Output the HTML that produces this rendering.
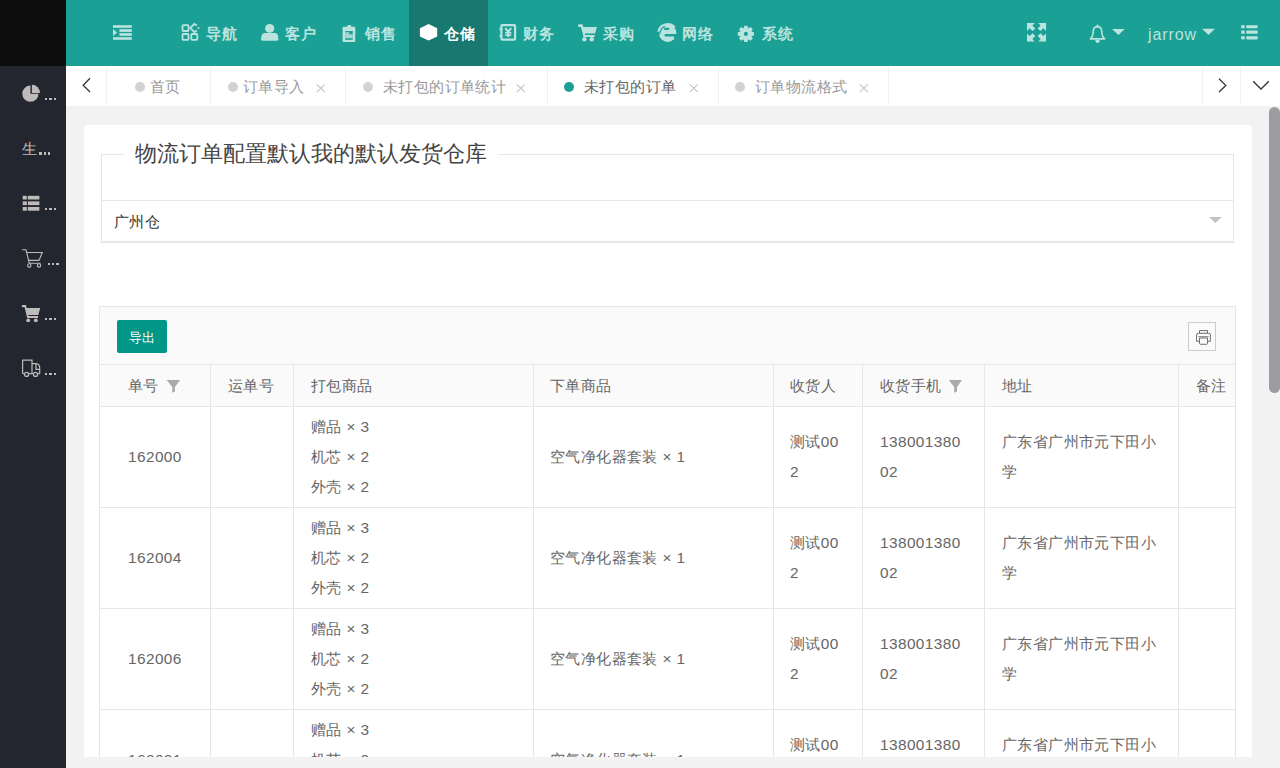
<!DOCTYPE html><html><head><meta charset="utf-8"><style>
*{margin:0;padding:0;box-sizing:border-box}
html,body{width:1280px;height:768px;overflow:hidden;font-family:"Liberation Sans",sans-serif;background:#f2f2f2;color:#666}
div,span,svg{position:absolute}
.t{white-space:nowrap;line-height:20px}
.nv{color:#bbe3df;font-size:15px;font-weight:bold;letter-spacing:1px}
.tb{font-size:15.4px;color:#999;letter-spacing:0.4px}
.td{font-size:15.4px;color:#666;letter-spacing:0.4px}
.vl{width:1px;background:#e6e6e6}
.hl{height:1px;background:#e6e6e6}
</style></head><body>
<div style="left:0;top:0;width:66px;height:66px;background:#0c0c0c"></div>
<div style="left:0;top:66px;width:66px;height:702px;background:#23262e"></div>
<div style="left:66px;top:0;width:1214px;height:66px;background:#1aa094"></div>
<div style="left:66px;top:66px;width:1214px;height:40px;background:#fff"></div>
<div class="t nv" style="left:205.8px;top:24px">导航</div>
<div class="t nv" style="left:285.2px;top:24px">客户</div>
<div class="t nv" style="left:364.6px;top:24px">销售</div>
<div style="left:409.0px;top:0;width:79.4px;height:66px;background:#197971"></div>
<div class="t nv" style="left:444.0px;top:24px;color:#fff">仓储</div>
<div class="t nv" style="left:523.4px;top:24px">财务</div>
<div class="t nv" style="left:602.8px;top:24px">采购</div>
<div class="t nv" style="left:682.2px;top:24px">网络</div>
<div class="t nv" style="left:761.6px;top:24px">系统</div>
<div class="vl" style="left:106px;top:67px;height:38px;background:#f0f0f0"></div>
<div class="vl" style="left:210px;top:67px;height:38px;background:#f0f0f0"></div>
<div class="vl" style="left:345px;top:67px;height:38px;background:#f0f0f0"></div>
<div class="vl" style="left:547px;top:67px;height:38px;background:#f0f0f0"></div>
<div class="vl" style="left:718px;top:67px;height:38px;background:#f0f0f0"></div>
<div class="vl" style="left:888px;top:67px;height:38px;background:#f0f0f0"></div>
<div class="vl" style="left:1202px;top:67px;height:38px;background:#f0f0f0"></div>
<div class="vl" style="left:1240px;top:67px;height:38px;background:#f0f0f0"></div>
<div style="left:135px;top:82px;width:10px;height:10px;border-radius:50%;background:#d2d2d2"></div>
<div class="t tb" style="left:150px;top:77px;">首页</div>
<div style="left:228px;top:82px;width:10px;height:10px;border-radius:50%;background:#d2d2d2"></div>
<div class="t tb" style="left:243px;top:77px;">订单导入</div>
<div style="left:363px;top:82px;width:10px;height:10px;border-radius:50%;background:#d2d2d2"></div>
<div class="t tb" style="left:383px;top:77px;">未打包的订单统计</div>
<div style="left:564px;top:82px;width:10px;height:10px;border-radius:50%;background:#1aa094"></div>
<div class="t tb" style="left:584px;top:77px;color:#666">未打包的订单</div>
<div style="left:735px;top:82px;width:10px;height:10px;border-radius:50%;background:#d2d2d2"></div>
<div class="t tb" style="left:755px;top:77px;">订单物流格式</div>
<div style="left:84px;top:125px;width:1168px;height:640px;background:#fff;border-radius:4px"></div>
<div style="left:101px;top:154px;width:1133px;height:46px;border:1px solid #e6e6e6;border-bottom:none"></div>
<div class="t" style="left:124px;top:139px;padding:0 11px;background:#fff;font-size:22px;line-height:30px;color:#444">物流订单配置默认我的默认发货仓库</div>
<div style="left:101px;top:200px;width:1133px;height:43px;border:1px solid #e6e6e6;border-bottom:2px solid #e6e6e6;background:#fff"></div>
<div class="t" style="left:114px;top:212px;font-size:15.4px;color:#333;letter-spacing:0.4px">广州仓</div>
<div style="left:99px;top:306px;width:1137px;height:59px;background:#fafafa;border:1px solid #e6e6e6"></div>
<div class="t" style="left:117px;top:320px;width:50px;height:33px;background:#009688;border-radius:2px;color:#fff;font-size:13.2px;text-align:center;line-height:35px">导出</div>
<div style="left:1188px;top:322px;width:28px;height:29px;border:1px solid #ccc"></div>
<div style="left:99px;top:364px;width:1137px;height:393px;overflow:hidden">
<div style="left:0;top:0;width:1137px;height:43px;background:#fafafa"></div>
<div class="vl" style="left:0px;top:0;height:393px"></div>
<div class="vl" style="left:111px;top:0;height:393px"></div>
<div class="vl" style="left:194px;top:0;height:393px"></div>
<div class="vl" style="left:434px;top:0;height:393px"></div>
<div class="vl" style="left:674px;top:0;height:393px"></div>
<div class="vl" style="left:763px;top:0;height:393px"></div>
<div class="vl" style="left:885px;top:0;height:393px"></div>
<div class="vl" style="left:1079px;top:0;height:393px"></div>
<div class="vl" style="left:1136px;top:0;height:393px"></div>
<div class="hl" style="left:0;top:0px;width:1137px"></div>
<div class="hl" style="left:0;top:42px;width:1137px"></div>
<div class="hl" style="left:0;top:143px;width:1137px"></div>
<div class="hl" style="left:0;top:244px;width:1137px"></div>
<div class="hl" style="left:0;top:345px;width:1137px"></div>
<div class="t td" style="left:29px;top:12px">单号</div>
<div class="t td" style="left:129px;top:12px">运单号</div>
<div class="t td" style="left:212px;top:12px">打包商品</div>
<div class="t td" style="left:451px;top:12px">下单商品</div>
<div class="t td" style="left:691px;top:12px">收货人</div>
<div class="t td" style="left:781px;top:12px">收货手机</div>
<div class="t td" style="left:903px;top:12px">地址</div>
<div class="t td" style="left:1097px;top:12px">备注</div>
<div class="t td" style="left:29px;top:83px">162000</div>
<div class="t td" style="left:212px;top:53px">赠品 × 3</div>
<div class="t td" style="left:212px;top:83px">机芯 × 2</div>
<div class="t td" style="left:212px;top:113px">外壳 × 2</div>
<div class="t td" style="left:451px;top:83px">空气净化器套装 × 1</div>
<div class="t td" style="left:691px;top:68px">测试00</div>
<div class="t td" style="left:691px;top:98px">2</div>
<div class="t td" style="left:781px;top:68px">138001380</div>
<div class="t td" style="left:781px;top:98px">02</div>
<div class="t td" style="left:903px;top:68px">广东省广州市元下田小</div>
<div class="t td" style="left:903px;top:98px">学</div>
<div class="t td" style="left:29px;top:184px">162004</div>
<div class="t td" style="left:212px;top:154px">赠品 × 3</div>
<div class="t td" style="left:212px;top:184px">机芯 × 2</div>
<div class="t td" style="left:212px;top:214px">外壳 × 2</div>
<div class="t td" style="left:451px;top:184px">空气净化器套装 × 1</div>
<div class="t td" style="left:691px;top:169px">测试00</div>
<div class="t td" style="left:691px;top:199px">2</div>
<div class="t td" style="left:781px;top:169px">138001380</div>
<div class="t td" style="left:781px;top:199px">02</div>
<div class="t td" style="left:903px;top:169px">广东省广州市元下田小</div>
<div class="t td" style="left:903px;top:199px">学</div>
<div class="t td" style="left:29px;top:285px">162006</div>
<div class="t td" style="left:212px;top:255px">赠品 × 3</div>
<div class="t td" style="left:212px;top:285px">机芯 × 2</div>
<div class="t td" style="left:212px;top:315px">外壳 × 2</div>
<div class="t td" style="left:451px;top:285px">空气净化器套装 × 1</div>
<div class="t td" style="left:691px;top:270px">测试00</div>
<div class="t td" style="left:691px;top:300px">2</div>
<div class="t td" style="left:781px;top:270px">138001380</div>
<div class="t td" style="left:781px;top:300px">02</div>
<div class="t td" style="left:903px;top:270px">广东省广州市元下田小</div>
<div class="t td" style="left:903px;top:300px">学</div>
<div class="t td" style="left:29px;top:386px">162021</div>
<div class="t td" style="left:212px;top:356px">赠品 × 3</div>
<div class="t td" style="left:212px;top:386px">机芯 × 2</div>
<div class="t td" style="left:212px;top:416px">外壳 × 2</div>
<div class="t td" style="left:451px;top:386px">空气净化器套装 × 1</div>
<div class="t td" style="left:691px;top:371px">测试00</div>
<div class="t td" style="left:691px;top:401px">2</div>
<div class="t td" style="left:781px;top:371px">138001380</div>
<div class="t td" style="left:781px;top:401px">02</div>
<div class="t td" style="left:903px;top:371px">广东省广州市元下田小</div>
<div class="t td" style="left:903px;top:401px">学</div>
</div>
<div class="t" style="left:1148px;top:25px;font-size:16px;letter-spacing:0.9px;color:#bbe3df">jarrow</div>
<div class="t" style="left:22px;top:139px;font-size:15.4px;color:#bfbbbb">生</div>
<div style="left:45.0px;top:97.8px;width:2.4px;height:2.4px;background:#bfbbbb"></div>
<div style="left:49.3px;top:97.8px;width:2.4px;height:2.4px;background:#bfbbbb"></div>
<div style="left:53.6px;top:97.8px;width:2.4px;height:2.4px;background:#bfbbbb"></div>
<div style="left:39.3px;top:152.3px;width:2.4px;height:2.4px;background:#bfbbbb"></div>
<div style="left:43.6px;top:152.3px;width:2.4px;height:2.4px;background:#bfbbbb"></div>
<div style="left:47.9px;top:152.3px;width:2.4px;height:2.4px;background:#bfbbbb"></div>
<div style="left:45.0px;top:207.8px;width:2.4px;height:2.4px;background:#bfbbbb"></div>
<div style="left:49.3px;top:207.8px;width:2.4px;height:2.4px;background:#bfbbbb"></div>
<div style="left:53.6px;top:207.8px;width:2.4px;height:2.4px;background:#bfbbbb"></div>
<div style="left:47.7px;top:262.9px;width:2.4px;height:2.4px;background:#bfbbbb"></div>
<div style="left:52.0px;top:262.9px;width:2.4px;height:2.4px;background:#bfbbbb"></div>
<div style="left:56.3px;top:262.9px;width:2.4px;height:2.4px;background:#bfbbbb"></div>
<div style="left:45.0px;top:317.8px;width:2.4px;height:2.4px;background:#bfbbbb"></div>
<div style="left:49.3px;top:317.8px;width:2.4px;height:2.4px;background:#bfbbbb"></div>
<div style="left:53.6px;top:317.8px;width:2.4px;height:2.4px;background:#bfbbbb"></div>
<div style="left:45.0px;top:372.6px;width:2.4px;height:2.4px;background:#bfbbbb"></div>
<div style="left:49.3px;top:372.6px;width:2.4px;height:2.4px;background:#bfbbbb"></div>
<div style="left:53.6px;top:372.6px;width:2.4px;height:2.4px;background:#bfbbbb"></div>
<svg style="left:0;top:0" width="1280" height="768" viewBox="0 0 1280 768"><g fill="#bbe3df"><rect x="113" y="25.2" width="18.8" height="2.6"/><rect x="119.4" y="29.2" width="12.4" height="2.7"/><rect x="119.4" y="33.2" width="12.4" height="2.6"/><rect x="113" y="37.2" width="18.8" height="2.6"/><path d="M113 29 L117.2 32.5 L113 36 Z"/></g><g fill="none" stroke="#bbe3df" stroke-width="1.8"><rect x="182.5" y="25.2" width="6" height="5.8" rx="0.8"/><rect x="182.5" y="34" width="6" height="5.8" rx="0.8"/><rect x="191.3" y="34" width="6" height="5.8" rx="0.8"/><path d="M196.9 25.5 L194.3 23.9 L190.3 28 L194.3 32.1 L196.9 30.4"/></g><g fill="#bbe3df"><circle cx="198.5" cy="28.1" r="1"/></g><g fill="#bbe3df"><ellipse cx="269.7" cy="28.4" rx="4.6" ry="4.3"/><path d="M264.5 33 L275 33 Q277.8 33.3 278.2 37 L278.4 39.6 Q278.4 40.8 276.5 40.8 L263 40.8 Q261.1 40.8 261.1 39.6 L261.3 37 Q261.7 33.3 264.5 33 Z"/></g><g fill="#bbe3df"><path d="M343.6 26.8 L346.8 26.8 L348 25.1 L350.4 25.1 L351.6 26.8 L354.3 26.8 Q355.3 26.8 355.3 27.8 L355.3 40.9 Q355.3 41.9 354.3 41.9 L343.6 41.9 Q342.6 41.9 342.6 40.9 L342.6 27.8 Q342.6 26.8 343.6 26.8 Z"/></g><g fill="#1aa094"><rect x="345.2" y="31" width="7.5" height="8.8"/></g><g fill="#bbe3df" opacity="0.85"><path d="M345.2 32.2 L349.2 32.2 L349.2 34.3 L352.7 34.3 L352.7 38.3 L345.2 38.3 Z"/></g><path fill="#fff" d="M428.6 24.1 L437.2 28.3 L437.2 36.6 L428.6 40.6 L419.9 36.6 L419.9 28.3 Z"/><g fill="none" stroke="#bbe3df" stroke-width="2.2"><rect x="501.4" y="25.2" width="13.7" height="14.4" rx="0.8"/></g><g fill="#bbe3df"><rect x="499.2" y="28.3" width="3" height="1.6"/><rect x="499.2" y="35.2" width="3" height="1.6"/><rect x="0" y="0" width="0" height="0"/></g><g fill="none" stroke="#bbe3df"><path stroke-width="2.1" d="M505.3 28.2 L508.2 32 L511.1 28.2"/><path stroke-width="2.3" d="M508.2 31.5 L508.2 37"/><path stroke-width="1.4" d="M505 32.8 L511.4 32.8 M505 35 L511.4 35"/></g><g fill="#bbe3df"><path d="M578.3 24.2 L582.5 24.2 L583.3 27.1 L596.9 27.1 L595.1 33.6 L584.8 33.6 L585.2 35.1 L594.7 35.1 L594.7 37 L583.6 37 L580.9 27 L578.3 27 Z"/><circle cx="584.4" cy="39.2" r="2.2"/><circle cx="591.8" cy="39.2" r="2.2"/></g><g fill="#bbe3df"><circle cx="667.7" cy="33.2" r="8.7"/><path d="M657.2 32 Q658.5 23.2 668 22.9 Q673.5 23 676 27.5 L668 27 Q662.5 26.5 659.6 31.2 Z"/></g><g fill="#1aa094"><rect x="664" y="27.7" width="5.3" height="2.3" rx="1"/><path d="M664.7 34 L677 34 L677 43 L674.2 43 L674.2 36.6 L664.7 36.6 Z"/></g><path fill="none" stroke="#1aa094" stroke-width="1.1" d="M659.6 34.5 Q660.2 28.8 664.8 26.2"/><path fill="#bbe3df" d="M751.74 31.83 L754.05 32.32 L754.05 35.48 L751.74 35.97 L751.50 36.57 L752.78 38.54 L750.54 40.78 L748.57 39.50 L747.97 39.74 L747.48 42.05 L744.32 42.05 L743.83 39.74 L743.23 39.50 L741.26 40.78 L739.02 38.54 L740.30 36.57 L740.06 35.97 L737.75 35.48 L737.75 32.32 L740.06 31.83 L740.30 31.23 L739.02 29.26 L741.26 27.02 L743.23 28.30 L743.83 28.06 L744.32 25.75 L747.48 25.75 L747.97 28.06 L748.57 28.30 L750.54 27.02 L752.78 29.26 L751.50 31.23 Z M747.90 33.9 A2 2.1 0 1 0 743.90 33.9 A2 2.1 0 1 0 747.90 33.9 Z" fill-rule="evenodd"/><g fill="#bbe3df"><path d="M1027 23 L1034.7 23 L1032.4 25.4 L1035.3 28.5 L1032.6 31.1 L1029.6 28.3 L1027 30.9 Z"/><path d="M1027 23 L1034.7 23 L1032.4 25.4 L1035.3 28.5 L1032.6 31.1 L1029.6 28.3 L1027 30.9 Z" transform="translate(2073 0) scale(-1 1)"/><path d="M1027 23 L1034.7 23 L1032.4 25.4 L1035.3 28.5 L1032.6 31.1 L1029.6 28.3 L1027 30.9 Z" transform="translate(0 64.4) scale(1 -1)"/><path d="M1027 23 L1034.7 23 L1032.4 25.4 L1035.3 28.5 L1032.6 31.1 L1029.6 28.3 L1027 30.9 Z" transform="translate(2073 64.4) scale(-1 -1)"/></g><g fill="none" stroke="#bbe3df" stroke-width="1.6" stroke-linejoin="round"><path d="M1097.5 26.6 Q1093.5 26.8 1093.3 30.8 L1093.1 33.5 Q1092.9 36.5 1090.4 38.9 L1104.6 38.9 Q1102.1 36.5 1101.9 33.5 L1101.7 30.8 Q1101.5 26.8 1097.5 26.6 Z"/></g><g fill="#bbe3df"><circle cx="1097.5" cy="25.6" r="1"/><path d="M1095.3 40 L1099.7 40 Q1099.6 42.9 1097.5 42.9 Q1095.4 42.9 1095.3 40 Z"/><path d="M1112.1 29.1 L1124.8 29.1 L1118.45 35 Z"/><path d="M1202 28.7 L1215 28.7 L1208.5 35.1 Z"/></g><g fill="#bbe3df"><rect x="1241.2" y="25.2" width="3.5" height="3.1"/><rect x="1241.2" y="30.6" width="3.5" height="3.2"/><rect x="1241.2" y="36.2" width="3.5" height="3.2"/><rect x="1246.2" y="25.2" width="11.5" height="3.1" rx="0.8"/><rect x="1246.2" y="30.6" width="11.5" height="3.2" rx="0.8"/><rect x="1246.2" y="36.2" width="11.5" height="3.2" rx="0.8"/></g><g fill="none" stroke="#333" stroke-width="1.3"><path d="M90 78.3 L83.2 85.2 L90 92"/><path d="M1219 78.8 L1225.8 85.4 L1219 92"/><path d="M1253.2 81.2 L1261 89 L1268.8 81.2"/></g><path fill="none" stroke="#c4c4c4" stroke-width="1.1" d="M316.8 84.3 L324.8 92.2 M324.8 84.3 L316.8 92.2"/><path fill="none" stroke="#c4c4c4" stroke-width="1.1" d="M516.8 84.3 L524.8 92.2 M524.8 84.3 L516.8 92.2"/><path fill="none" stroke="#c4c4c4" stroke-width="1.1" d="M689.8 84.3 L697.8 92.2 M697.8 84.3 L689.8 92.2"/><path fill="none" stroke="#c4c4c4" stroke-width="1.1" d="M859.8 84.3 L867.8 92.2 M867.8 84.3 L859.8 92.2"/><g fill="#bfbbbb"><path d="M30.4 85.6 A8.1 8.1 0 1 0 38.5 93.7 L30.4 93.7 Z"/><path d="M31.9 84.8 A8.1 8.1 0 0 1 40 92.9 L31.9 92.9 Z"/></g><g fill="#bfbbbb"><rect x="22.7" y="195.8" width="4.1" height="3.7"/><rect x="22.7" y="201.4" width="4.1" height="3.7"/><rect x="22.7" y="207" width="4.1" height="3.7"/><rect x="27.8" y="195.8" width="11.6" height="3.7"/><rect x="27.8" y="201.4" width="11.6" height="3.7"/><rect x="27.8" y="207" width="11.6" height="3.7"/></g><g fill="none" stroke="#bfbbbb" stroke-width="1.1"><path d="M22.2 249.8 L26 249.8 L29.3 263.2 L40.6 263.2"/><path d="M26.8 252.5 L42.3 252.5 L39 260.4 L28.8 260.4"/><circle cx="29.3" cy="265.4" r="1.7"/><circle cx="39" cy="265.4" r="1.7"/></g><g fill="#bfbbbb"><path d="M21.9 304.9 L26 304.9 L26.6 308 L40.2 308 L38.3 314.9 L28.3 314.9 L28.6 316 L38 316 L38 318 L27.2 318 L24.6 307.3 L21.9 307.3 Z"/><circle cx="28.2" cy="320.3" r="1.9"/><circle cx="35.8" cy="320.3" r="1.9"/></g><g fill="none" stroke="#bfbbbb" stroke-width="1.2"><path d="M22.6 373.4 L22.6 360.6 Q22.6 360.2 23 360.2 L32 360.2 L32 373.4"/><path d="M32 363.6 L36 363.6 Q39.7 364 39.7 368 L39.7 373.4"/><path d="M36 364 L36 369.4 L39.7 369.4"/><path d="M22.6 373.6 L24.6 373.6 M28.6 373.6 L33.5 373.6 M37.5 373.6 L39.9 373.6"/><circle cx="26.6" cy="374.4" r="2"/><circle cx="35.5" cy="374.4" r="2"/></g><path fill="#aaa" d="M166.7 380.1 L180.0 380.1 L175.0 387 L175.0 391.5 L172.2 392.8 L172.2 387 Z"/><path fill="#aaa" d="M948.7 380.1 L962.0 380.1 L957.0 387 L957.0 391.5 L954.2 392.8 L954.2 387 Z"/><path fill="#c2c2c2" d="M1209.1 217.1 L1221.8 217.1 L1215.45 222.9 Z"/><g fill="none" stroke="#666" stroke-width="0.95"><path d="M1199.5 333 L1199.5 330.6 L1207.5 330.6 L1207.5 333"/><path d="M1199.3 341.3 L1196.6 341.3 L1196.6 335 Q1196.6 333.3 1198.3 333.3 L1208.7 333.3 Q1210.4 333.3 1210.4 335 L1210.4 341.3 L1207.7 341.3"/><path d="M1199.5 338 L1207.5 338 L1207.5 343.3 Q1207.5 344.3 1206.5 344.3 L1200.5 344.3 Q1199.5 344.3 1199.5 343.3 Z"/><path d="M1198.3 336.7 L1208.7 336.7" stroke="#777"/></g></svg>
<div style="left:66px;top:757px;width:1214px;height:11px;background:#f2f2f2"></div>
<div style="left:1269px;top:107px;width:11px;height:286px;background:#9c9da0;border-radius:6px"></div>
</body></html>
